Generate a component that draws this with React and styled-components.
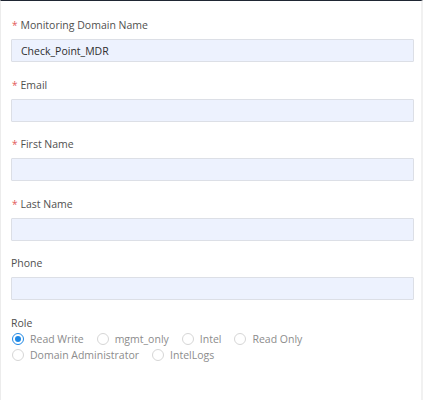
import React from 'react'
import styled, { createGlobalStyle } from 'styled-components'

const GlobalStyle = createGlobalStyle`
    html, body {
        margin: 0;
        padding: 0;
        background: #ffffff;
    }
    * {
        box-sizing: border-box;
    }
`

const Panel = styled.div`
    width: 423px;
    height: 400px;
    border-top: 1px solid #1f2633;
    border-left: 1px solid #ececec;
    border-right: 2px solid #f1f1f1;
    padding: 16px 7px 0 10px;
    font-family: "Open Sans", "Noto Sans", sans-serif;
    font-size: 10.5px;
    color: #4a4a4a;
    background: #ffffff;
`
const Field = styled.div`
    display: flex;
    flex-direction: column;
    margin-bottom: 14.5px;
`
const Label = styled.label`
    display: flex;
    align-items: center;
    height: 16px;
    line-height: 16px;
    margin-bottom: 6px;
    color: #505050;
`
const Star = styled.span`
    color: #e25a5a;
    margin-right: 3px;
    font-size: 10px;
    margin-left: 1px;
`
const Input = styled.input`
    height: 23px;
    width: 100%;
    border: 1px solid #dcdfe6;
    border-radius: 1px;
    background: #edf2fe;
    padding: 0 9px;
    font-family: inherit;
    font-size: 10.5px;
    color: #2e2e2e;
    outline: none;
`
const RoleLabel = styled.div`
    height: 16px;
    line-height: 16px;
    margin-top: 1px;
    color: #505050;
`
const RadioGroup = styled.div`
    display: flex;
    flex-wrap: wrap;
    width: 315px;
`
const Option = styled.label`
    display: flex;
    align-items: center;
    height: 16px;
    margin-right: 12px;
    color: #8c8c8c;
`
const Circle = styled.span`
    width: 12px;
    height: 12px;
    border-radius: 50%;
    border: 1px solid ${({ $on }) => ($on ? '#1e88e5' : '#d6d6d6')};
    display: flex;
    align-items: center;
    justify-content: center;
    margin-right: 6px;
    margin-left: 1px;
    &::after {
        content: '';
        width: 6px;
        height: 6px;
        border-radius: 50%;
        background: ${({ $on }) => ($on ? '#1e88e5' : 'transparent')};
    }
`

const fields = [
    { label: 'Monitoring Domain Name', required: true, value: 'Check_Point_MDR' },
    { label: 'Email', required: true, value: '' },
    { label: 'First Name', required: true, value: '' },
    { label: 'Last Name', required: true, value: '' },
    { label: 'Phone', required: false, value: '' },
]

const roles = ['Read Write', 'mgmt_only', 'Intel', 'Read Only', 'Domain Administrator', 'IntelLogs']

const App = () => {
    return (
        <>
            <GlobalStyle />
            <Panel>
                {fields.map(f => (
                    <Field key={f.label}>
                        <Label>
                            {f.required && <Star>*</Star>}
                            {f.label}
                        </Label>
                        <Input defaultValue={f.value} />
                    </Field>
                ))}
                <RoleLabel>Role</RoleLabel>
                <RadioGroup>
                    {roles.map((r, i) => (
                        <Option key={r}>
                            <Circle $on={i === 0} />
                            {r}
                        </Option>
                    ))}
                </RadioGroup>
            </Panel>
        </>
    )
}

export default App
